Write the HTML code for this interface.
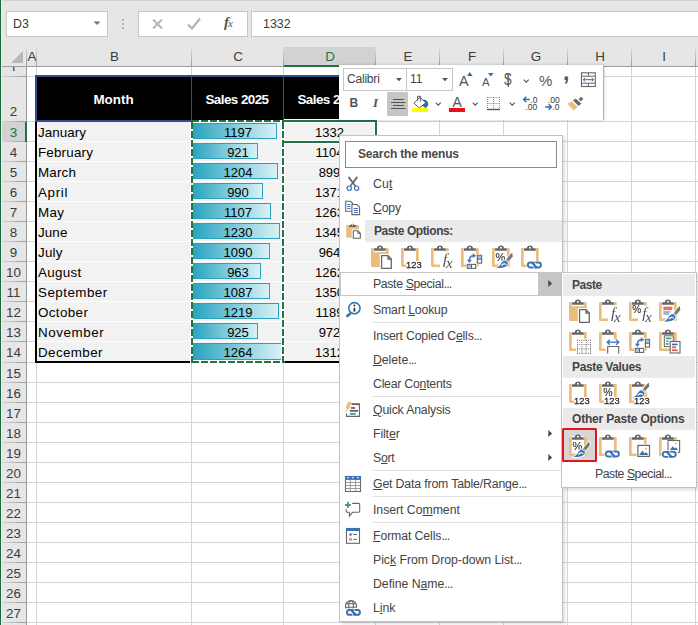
<!DOCTYPE html><html><head><meta charset="utf-8"><title>Excel</title><style>
*{box-sizing:border-box;margin:0;padding:0}
html,body{width:698px;height:625px;overflow:hidden;background:#fff}
body{position:relative;font-family:"Liberation Sans",sans-serif;color:#000}
.abs{position:absolute}
#top{left:0;top:0;width:698px;height:47px;background:#e6e6e6}
.box{position:absolute;background:#fff;border:1px solid #c6c6c6;top:11px;height:26px}
.ui{font-family:"Liberation Sans",sans-serif;font-size:12px;color:#444;white-space:nowrap}
.cell{font-family:"Liberation Sans",sans-serif;font-size:13.4px;white-space:nowrap;color:#000}
.colh{position:absolute;top:47px;height:19px;background:#e6e6e6;font-size:13.4px;color:#3b3b3b;text-align:center;line-height:20px}
.rowh{position:absolute;left:1px;width:25px;background:#e6e6e6;font-size:13.4px;color:#3b3b3b;text-align:center}
.vl{position:absolute;width:1px;background:#d4d4d4}
.hl{position:absolute;height:1px;background:#d4d4d4}
.mi{position:absolute;left:373px;font-size:12.3px;color:#444;white-space:nowrap;letter-spacing:-0.22px}
.mi i{font-style:normal;letter-spacing:-0.75px}
.mi u{text-decoration:underline;text-underline-offset:1px}
.sep{position:absolute;left:373px;width:189px;height:1px;background:#e1e1e1}
.hdr{position:absolute;background:#ebebeb;background-image:radial-gradient(circle at 1.5px 1.5px,#e5e5e5 .7px,rgba(229,229,229,0) .9px);background-size:3px 3px;font-weight:bold;font-size:12px;color:#444;white-space:nowrap}
</style></head><body>
<div id="top" class="abs"></div>
<div class="abs" style="left:0;top:0;width:698px;height:1px;background:#d2d2d2"></div>
<div class="abs" style="left:1px;top:0;width:1px;height:625px;background:#efecec;z-index:5"></div>
<div class="abs" style="left:0;top:0;width:1px;height:625px;background:#1a6b3e;z-index:5"></div>
<div class="box" style="left:6px;width:102px"><span class="abs cell" style="left:6px;top:5px;color:#3a3a3a;font-size:12.4px">D3</span><svg class="abs" style="left:86px;top:9px" width="9" height="5"><path d="M0.5 0.5h7l-3.5 3.5z" fill="#777"/></svg></div>
<svg class="abs" style="left:121px;top:18px" width="4" height="14"><rect x="1" y="1" width="2" height="2" fill="#b5b5b5"/><rect x="1" y="5" width="2" height="2" fill="#b5b5b5"/><rect x="1" y="9" width="2" height="2" fill="#b5b5b5"/></svg>
<div class="box" style="left:138px;width:110px"><svg class="abs" style="left:13px;top:7px" width="11" height="11"><path d="M1 .5l9 9M10 .5l-9 9" stroke="#b3b3b3" stroke-width="1.900" fill="none"/></svg><svg class="abs" style="left:48px;top:6px" width="14" height="12"><path d="M1 6.500l4 4l8-10" stroke="#b3b3b3" stroke-width="2.200" fill="none"/></svg><span class="abs" style="left:85px;top:2px;font-family:'Liberation Serif',serif;font-style:italic;font-size:15px;color:#555;letter-spacing:-1px"><b>f</b><span style="font-size:11px">x</span></span></div>
<div class="box" style="left:251px;width:460px"><span class="abs cell" style="left:11px;top:5px;color:#3a3a3a;font-size:12.4px">1332</span></div>
<div class="abs" style="left:1px;top:47px;width:697px;height:20px;background:#e6e6e6;border-bottom:1px solid #9e9e9e"></div>
<svg class="abs" style="left:10px;top:51px" width="14" height="14"><path d="M13 0v12h-12z" fill="#b8b8b8"/></svg>
<div class="abs" style="left:26px;top:47px;width:1px;height:19px;background:linear-gradient(#e0e0e0,#9a9a9a)"></div>
<div class="colh" style="left:27px;width:10px;">A</div>
<div class="colh" style="left:37px;width:155px;">B</div>
<div class="colh" style="left:192px;width:92px;">C</div>
<div class="colh" style="left:284px;width:92px;background:#d2d2d2;color:#217346;border-bottom:2px solid #217346;height:20px;">D</div>
<div class="colh" style="left:376px;width:64px;">E</div>
<div class="colh" style="left:440px;width:64px;">F</div>
<div class="colh" style="left:504px;width:64px;">G</div>
<div class="colh" style="left:568px;width:64px;">H</div>
<div class="colh" style="left:632px;width:64px;">I</div>
<div class="abs" style="left:36px;top:47px;width:1px;height:19px;background:linear-gradient(#e0e0e0,#9a9a9a)"></div>
<div class="abs" style="left:191px;top:47px;width:1px;height:19px;background:linear-gradient(#e0e0e0,#9a9a9a)"></div>
<div class="abs" style="left:283px;top:47px;width:1px;height:19px;background:linear-gradient(#e0e0e0,#9a9a9a)"></div>
<div class="abs" style="left:375px;top:47px;width:1px;height:19px;background:linear-gradient(#e0e0e0,#9a9a9a)"></div>
<div class="abs" style="left:439px;top:47px;width:1px;height:19px;background:linear-gradient(#e0e0e0,#9a9a9a)"></div>
<div class="abs" style="left:503px;top:47px;width:1px;height:19px;background:linear-gradient(#e0e0e0,#9a9a9a)"></div>
<div class="abs" style="left:567px;top:47px;width:1px;height:19px;background:linear-gradient(#e0e0e0,#9a9a9a)"></div>
<div class="abs" style="left:631px;top:47px;width:1px;height:19px;background:linear-gradient(#e0e0e0,#9a9a9a)"></div>
<div class="abs" style="left:695px;top:47px;width:1px;height:19px;background:linear-gradient(#e0e0e0,#9a9a9a)"></div>
<div class="rowh" style="top:67px;height:10px;overflow:hidden;"><span class="abs" style="left:11px;width:4px;top:0;height:4px;overflow:hidden"><span class="abs" style="left:-11px;width:25px;top:-7px;line-height:20px">1</span></span></div>
<div class="abs" style="left:1px;top:76px;width:25px;height:1px;background:linear-gradient(90deg,#d8d8d8,#9a9a9a)"></div>
<div class="rowh" style="top:77px;height:45px;"><span class="abs" style="left:0;width:25px;bottom:0px;line-height:20px">2</span></div>
<div class="abs" style="left:1px;top:121px;width:25px;height:1px;background:linear-gradient(90deg,#d8d8d8,#9a9a9a)"></div>
<div class="rowh" style="top:122px;height:20px;background:#d2d2d2;color:#217346;"><span class="abs" style="left:0;width:25px;bottom:-1px;line-height:20px">3</span></div>
<div class="abs" style="left:1px;top:141px;width:25px;height:1px;background:linear-gradient(90deg,#d8d8d8,#9a9a9a)"></div>
<div class="rowh" style="top:142px;height:20px;"><span class="abs" style="left:0;width:25px;bottom:-1px;line-height:20px">4</span></div>
<div class="abs" style="left:1px;top:161px;width:25px;height:1px;background:linear-gradient(90deg,#d8d8d8,#9a9a9a)"></div>
<div class="rowh" style="top:162px;height:20px;"><span class="abs" style="left:0;width:25px;bottom:-1px;line-height:20px">5</span></div>
<div class="abs" style="left:1px;top:181px;width:25px;height:1px;background:linear-gradient(90deg,#d8d8d8,#9a9a9a)"></div>
<div class="rowh" style="top:182px;height:20px;"><span class="abs" style="left:0;width:25px;bottom:-1px;line-height:20px">6</span></div>
<div class="abs" style="left:1px;top:201px;width:25px;height:1px;background:linear-gradient(90deg,#d8d8d8,#9a9a9a)"></div>
<div class="rowh" style="top:202px;height:20px;"><span class="abs" style="left:0;width:25px;bottom:-1px;line-height:20px">7</span></div>
<div class="abs" style="left:1px;top:221px;width:25px;height:1px;background:linear-gradient(90deg,#d8d8d8,#9a9a9a)"></div>
<div class="rowh" style="top:222px;height:20px;"><span class="abs" style="left:0;width:25px;bottom:-1px;line-height:20px">8</span></div>
<div class="abs" style="left:1px;top:241px;width:25px;height:1px;background:linear-gradient(90deg,#d8d8d8,#9a9a9a)"></div>
<div class="rowh" style="top:242px;height:20px;"><span class="abs" style="left:0;width:25px;bottom:-1px;line-height:20px">9</span></div>
<div class="abs" style="left:1px;top:261px;width:25px;height:1px;background:linear-gradient(90deg,#d8d8d8,#9a9a9a)"></div>
<div class="rowh" style="top:262px;height:20px;"><span class="abs" style="left:0;width:25px;bottom:-1px;line-height:20px">10</span></div>
<div class="abs" style="left:1px;top:281px;width:25px;height:1px;background:linear-gradient(90deg,#d8d8d8,#9a9a9a)"></div>
<div class="rowh" style="top:282px;height:20px;"><span class="abs" style="left:0;width:25px;bottom:-1px;line-height:20px">11</span></div>
<div class="abs" style="left:1px;top:301px;width:25px;height:1px;background:linear-gradient(90deg,#d8d8d8,#9a9a9a)"></div>
<div class="rowh" style="top:302px;height:20px;"><span class="abs" style="left:0;width:25px;bottom:-1px;line-height:20px">12</span></div>
<div class="abs" style="left:1px;top:321px;width:25px;height:1px;background:linear-gradient(90deg,#d8d8d8,#9a9a9a)"></div>
<div class="rowh" style="top:322px;height:20px;"><span class="abs" style="left:0;width:25px;bottom:-1px;line-height:20px">13</span></div>
<div class="abs" style="left:1px;top:341px;width:25px;height:1px;background:linear-gradient(90deg,#d8d8d8,#9a9a9a)"></div>
<div class="rowh" style="top:342px;height:21px;"><span class="abs" style="left:0;width:25px;bottom:0px;line-height:20px">14</span></div>
<div class="abs" style="left:1px;top:362px;width:25px;height:1px;background:linear-gradient(90deg,#d8d8d8,#9a9a9a)"></div>
<div class="rowh" style="top:363px;height:20px;"><span class="abs" style="left:0;width:25px;bottom:-1px;line-height:20px">15</span></div>
<div class="abs" style="left:1px;top:382px;width:25px;height:1px;background:linear-gradient(90deg,#d8d8d8,#9a9a9a)"></div>
<div class="rowh" style="top:383px;height:20px;"><span class="abs" style="left:0;width:25px;bottom:-1px;line-height:20px">16</span></div>
<div class="abs" style="left:1px;top:402px;width:25px;height:1px;background:linear-gradient(90deg,#d8d8d8,#9a9a9a)"></div>
<div class="rowh" style="top:403px;height:20px;"><span class="abs" style="left:0;width:25px;bottom:-1px;line-height:20px">17</span></div>
<div class="abs" style="left:1px;top:422px;width:25px;height:1px;background:linear-gradient(90deg,#d8d8d8,#9a9a9a)"></div>
<div class="rowh" style="top:423px;height:20px;"><span class="abs" style="left:0;width:25px;bottom:-1px;line-height:20px">18</span></div>
<div class="abs" style="left:1px;top:442px;width:25px;height:1px;background:linear-gradient(90deg,#d8d8d8,#9a9a9a)"></div>
<div class="rowh" style="top:443px;height:20px;"><span class="abs" style="left:0;width:25px;bottom:-1px;line-height:20px">19</span></div>
<div class="abs" style="left:1px;top:462px;width:25px;height:1px;background:linear-gradient(90deg,#d8d8d8,#9a9a9a)"></div>
<div class="rowh" style="top:463px;height:20px;"><span class="abs" style="left:0;width:25px;bottom:-1px;line-height:20px">20</span></div>
<div class="abs" style="left:1px;top:482px;width:25px;height:1px;background:linear-gradient(90deg,#d8d8d8,#9a9a9a)"></div>
<div class="rowh" style="top:483px;height:20px;"><span class="abs" style="left:0;width:25px;bottom:-1px;line-height:20px">21</span></div>
<div class="abs" style="left:1px;top:502px;width:25px;height:1px;background:linear-gradient(90deg,#d8d8d8,#9a9a9a)"></div>
<div class="rowh" style="top:503px;height:20px;"><span class="abs" style="left:0;width:25px;bottom:-1px;line-height:20px">22</span></div>
<div class="abs" style="left:1px;top:522px;width:25px;height:1px;background:linear-gradient(90deg,#d8d8d8,#9a9a9a)"></div>
<div class="rowh" style="top:523px;height:20px;"><span class="abs" style="left:0;width:25px;bottom:-1px;line-height:20px">23</span></div>
<div class="abs" style="left:1px;top:542px;width:25px;height:1px;background:linear-gradient(90deg,#d8d8d8,#9a9a9a)"></div>
<div class="rowh" style="top:543px;height:20px;"><span class="abs" style="left:0;width:25px;bottom:-1px;line-height:20px">24</span></div>
<div class="abs" style="left:1px;top:562px;width:25px;height:1px;background:linear-gradient(90deg,#d8d8d8,#9a9a9a)"></div>
<div class="rowh" style="top:563px;height:20px;"><span class="abs" style="left:0;width:25px;bottom:-1px;line-height:20px">25</span></div>
<div class="abs" style="left:1px;top:582px;width:25px;height:1px;background:linear-gradient(90deg,#d8d8d8,#9a9a9a)"></div>
<div class="rowh" style="top:583px;height:20px;"><span class="abs" style="left:0;width:25px;bottom:-1px;line-height:20px">26</span></div>
<div class="abs" style="left:1px;top:602px;width:25px;height:1px;background:linear-gradient(90deg,#d8d8d8,#9a9a9a)"></div>
<div class="rowh" style="top:603px;height:20px;"><span class="abs" style="left:0;width:25px;bottom:-1px;line-height:20px">27</span></div>
<div class="abs" style="left:1px;top:622px;width:25px;height:1px;background:linear-gradient(90deg,#d8d8d8,#9a9a9a)"></div>
<div class="rowh" style="top:623px;height:20px;"><span class="abs" style="left:0;width:25px;bottom:-1px;line-height:20px">28</span></div>
<div class="abs" style="left:1px;top:642px;width:25px;height:1px;background:linear-gradient(90deg,#d8d8d8,#9a9a9a)"></div>
<div class="abs" style="left:26px;top:67px;width:1px;height:558px;background:#9e9e9e"></div>
<div class="abs" style="left:25px;top:122px;width:2px;height:20px;background:#217346"></div>
<div class="vl" style="left:36px;top:67px;height:558px"></div>
<div class="vl" style="left:191px;top:67px;height:558px"></div>
<div class="vl" style="left:283px;top:67px;height:558px"></div>
<div class="vl" style="left:375px;top:67px;height:558px"></div>
<div class="vl" style="left:439px;top:67px;height:558px"></div>
<div class="vl" style="left:503px;top:67px;height:558px"></div>
<div class="vl" style="left:567px;top:67px;height:558px"></div>
<div class="vl" style="left:631px;top:67px;height:558px"></div>
<div class="vl" style="left:695px;top:67px;height:558px"></div>
<div class="hl" style="left:27px;top:76px;width:671px"></div>
<div class="hl" style="left:27px;top:121px;width:671px"></div>
<div class="hl" style="left:27px;top:141px;width:671px"></div>
<div class="hl" style="left:27px;top:161px;width:671px"></div>
<div class="hl" style="left:27px;top:181px;width:671px"></div>
<div class="hl" style="left:27px;top:201px;width:671px"></div>
<div class="hl" style="left:27px;top:221px;width:671px"></div>
<div class="hl" style="left:27px;top:241px;width:671px"></div>
<div class="hl" style="left:27px;top:261px;width:671px"></div>
<div class="hl" style="left:27px;top:281px;width:671px"></div>
<div class="hl" style="left:27px;top:301px;width:671px"></div>
<div class="hl" style="left:27px;top:321px;width:671px"></div>
<div class="hl" style="left:27px;top:341px;width:671px"></div>
<div class="hl" style="left:27px;top:362px;width:671px"></div>
<div class="hl" style="left:27px;top:382px;width:671px"></div>
<div class="hl" style="left:27px;top:402px;width:671px"></div>
<div class="hl" style="left:27px;top:422px;width:671px"></div>
<div class="hl" style="left:27px;top:442px;width:671px"></div>
<div class="hl" style="left:27px;top:462px;width:671px"></div>
<div class="hl" style="left:27px;top:482px;width:671px"></div>
<div class="hl" style="left:27px;top:502px;width:671px"></div>
<div class="hl" style="left:27px;top:522px;width:671px"></div>
<div class="hl" style="left:27px;top:542px;width:671px"></div>
<div class="hl" style="left:27px;top:562px;width:671px"></div>
<div class="hl" style="left:27px;top:582px;width:671px"></div>
<div class="hl" style="left:27px;top:602px;width:671px"></div>
<div class="hl" style="left:27px;top:622px;width:671px"></div>
<div class="abs" style="left:36px;top:76px;width:339px;height:46px;background:#000"></div>
<div class="abs" style="left:36px;top:122px;width:339px;height:239px;background:#f2f2f2"></div>
<div class="hl" style="left:37px;top:141px;width:338px;background:#fdfdfd"></div>
<div class="hl" style="left:37px;top:161px;width:338px;background:#fdfdfd"></div>
<div class="hl" style="left:37px;top:181px;width:338px;background:#fdfdfd"></div>
<div class="hl" style="left:37px;top:201px;width:338px;background:#fdfdfd"></div>
<div class="hl" style="left:37px;top:221px;width:338px;background:#fdfdfd"></div>
<div class="hl" style="left:37px;top:241px;width:338px;background:#fdfdfd"></div>
<div class="hl" style="left:37px;top:261px;width:338px;background:#fdfdfd"></div>
<div class="hl" style="left:37px;top:281px;width:338px;background:#fdfdfd"></div>
<div class="hl" style="left:37px;top:301px;width:338px;background:#fdfdfd"></div>
<div class="hl" style="left:37px;top:321px;width:338px;background:#fdfdfd"></div>
<div class="hl" style="left:37px;top:341px;width:338px;background:#fdfdfd"></div>
<div class="vl" style="left:191px;top:122px;height:240px;background:#fdfdfd"></div>
<div class="vl" style="left:283px;top:122px;height:240px;background:#fdfdfd"></div>
<div class="abs" style="left:35px;top:75px;width:341px;height:47px;border:2px solid #2f4f8f;border-right:none"></div>
<div class="abs" style="left:191px;top:76px;width:1px;height:45px;background:#2f4f8f"></div>
<div class="abs" style="left:283px;top:76px;width:1px;height:45px;background:#2f4f8f"></div>
<div class="abs" style="left:36px;width:155px;font-weight:bold;color:#fff;font-size:13.4px;top:92px;text-align:center;white-space:nowrap">Month</div>
<div class="abs" style="left:191px;width:92px;font-weight:bold;color:#fff;font-size:13.4px;top:92px;text-align:center;white-space:nowrap;letter-spacing:-0.55px">Sales 2025</div>
<div class="abs" style="left:283px;width:92px;font-weight:bold;color:#fff;font-size:13.4px;top:92px;text-align:center;white-space:nowrap;letter-spacing:-0.55px">Sales 2024</div>
<div class="abs" style="left:35px;top:122px;width:2px;height:241px;background:#000"></div>
<div class="abs" style="left:35px;top:361px;width:341px;height:2px;background:#000"></div>
<div class="abs cell" style="left:38px;top:125px;letter-spacing:0.05px">January</div>
<div class="abs" style="left:193px;top:123px;width:84px;height:16px;border:1px solid #2aa1bd;background:linear-gradient(90deg,#2aa5c0,#d9f1f6)"></div>
<div class="abs cell" style="left:192px;width:92px;top:125px;text-align:center;font-size:13px">1197</div>
<div class="abs cell" style="left:283.500px;width:92px;top:125px;text-align:center;font-size:13px">1332</div>
<div class="abs cell" style="left:38px;top:145px;letter-spacing:0.18px">February</div>
<div class="abs" style="left:193px;top:143px;width:65px;height:16px;border:1px solid #2aa1bd;background:linear-gradient(90deg,#2aa5c0,#d9f1f6)"></div>
<div class="abs cell" style="left:192px;width:92px;top:145px;text-align:center;font-size:13px">921</div>
<div class="abs cell" style="left:283.500px;width:92px;top:145px;text-align:center;font-size:13px">1104</div>
<div class="abs cell" style="left:38px;top:165px;letter-spacing:0.18px">March</div>
<div class="abs" style="left:193px;top:163px;width:85px;height:16px;border:1px solid #2aa1bd;background:linear-gradient(90deg,#2aa5c0,#d9f1f6)"></div>
<div class="abs cell" style="left:192px;width:92px;top:165px;text-align:center;font-size:13px">1204</div>
<div class="abs cell" style="left:283.500px;width:92px;top:165px;text-align:center;font-size:13px">899</div>
<div class="abs cell" style="left:38px;top:185px;letter-spacing:0.66px">April</div>
<div class="abs" style="left:193px;top:183px;width:70px;height:16px;border:1px solid #2aa1bd;background:linear-gradient(90deg,#2aa5c0,#d9f1f6)"></div>
<div class="abs cell" style="left:192px;width:92px;top:185px;text-align:center;font-size:13px">990</div>
<div class="abs cell" style="left:283.500px;width:92px;top:185px;text-align:center;font-size:13px">1371</div>
<div class="abs cell" style="left:38px;top:205px;letter-spacing:0.36px">May</div>
<div class="abs" style="left:193px;top:203px;width:78px;height:16px;border:1px solid #2aa1bd;background:linear-gradient(90deg,#2aa5c0,#d9f1f6)"></div>
<div class="abs cell" style="left:192px;width:92px;top:205px;text-align:center;font-size:13px">1107</div>
<div class="abs cell" style="left:283.500px;width:92px;top:205px;text-align:center;font-size:13px">1263</div>
<div class="abs cell" style="left:38px;top:225px;letter-spacing:0.11px">June</div>
<div class="abs" style="left:193px;top:223px;width:87px;height:16px;border:1px solid #2aa1bd;background:linear-gradient(90deg,#2aa5c0,#d9f1f6)"></div>
<div class="abs cell" style="left:192px;width:92px;top:225px;text-align:center;font-size:13px">1230</div>
<div class="abs cell" style="left:283.500px;width:92px;top:225px;text-align:center;font-size:13px">1345</div>
<div class="abs cell" style="left:38px;top:245px;letter-spacing:0.19px">July</div>
<div class="abs" style="left:193px;top:243px;width:77px;height:16px;border:1px solid #2aa1bd;background:linear-gradient(90deg,#2aa5c0,#d9f1f6)"></div>
<div class="abs cell" style="left:192px;width:92px;top:245px;text-align:center;font-size:13px">1090</div>
<div class="abs cell" style="left:283.500px;width:92px;top:245px;text-align:center;font-size:13px">964</div>
<div class="abs cell" style="left:38px;top:265px;letter-spacing:0.33px">August</div>
<div class="abs" style="left:193px;top:263px;width:68px;height:16px;border:1px solid #2aa1bd;background:linear-gradient(90deg,#2aa5c0,#d9f1f6)"></div>
<div class="abs cell" style="left:192px;width:92px;top:265px;text-align:center;font-size:13px">963</div>
<div class="abs cell" style="left:283.500px;width:92px;top:265px;text-align:center;font-size:13px">1262</div>
<div class="abs cell" style="left:38px;top:285px;letter-spacing:0.46px">September</div>
<div class="abs" style="left:193px;top:283px;width:77px;height:16px;border:1px solid #2aa1bd;background:linear-gradient(90deg,#2aa5c0,#d9f1f6)"></div>
<div class="abs cell" style="left:192px;width:92px;top:285px;text-align:center;font-size:13px">1087</div>
<div class="abs cell" style="left:283.500px;width:92px;top:285px;text-align:center;font-size:13px">1350</div>
<div class="abs cell" style="left:38px;top:305px;letter-spacing:0.37px">October</div>
<div class="abs" style="left:193px;top:303px;width:86px;height:16px;border:1px solid #2aa1bd;background:linear-gradient(90deg,#2aa5c0,#d9f1f6)"></div>
<div class="abs cell" style="left:192px;width:92px;top:305px;text-align:center;font-size:13px">1219</div>
<div class="abs cell" style="left:283.500px;width:92px;top:305px;text-align:center;font-size:13px">1189</div>
<div class="abs cell" style="left:38px;top:325px;letter-spacing:0.55px">November</div>
<div class="abs" style="left:193px;top:323px;width:65px;height:16px;border:1px solid #2aa1bd;background:linear-gradient(90deg,#2aa5c0,#d9f1f6)"></div>
<div class="abs cell" style="left:192px;width:92px;top:325px;text-align:center;font-size:13px">925</div>
<div class="abs cell" style="left:283.500px;width:92px;top:325px;text-align:center;font-size:13px">972</div>
<div class="abs cell" style="left:38px;top:345px;letter-spacing:0.38px">December</div>
<div class="abs" style="left:193px;top:343px;width:89px;height:17px;border:1px solid #2aa1bd;background:linear-gradient(90deg,#2aa5c0,#d9f1f6)"></div>
<div class="abs cell" style="left:192px;width:92px;top:345px;text-align:center;font-size:13px">1264</div>
<div class="abs cell" style="left:283.500px;width:92px;top:345px;text-align:center;font-size:13px">1312</div>
<svg class="abs" style="left:188px;top:118px" width="98" height="247" shape-rendering="crispEdges"><g fill="#fff"><rect x="2" y="4" width="3" height="241"/><rect x="93" y="4" width="4" height="241"/><rect x="3" y="2" width="93" height="3"/><rect x="3" y="242" width="93" height="3"/></g><g fill="none" stroke="#217346" stroke-width="2"><path d="M3 3h94M3 244h94" stroke-dasharray="7 2" stroke-dashoffset="8"/><path d="M4 4v240M95 4v240" stroke-dasharray="7 2"/><path d="M3 3h2M94 3h2M3 244h2M94 244h2"/></g></svg>
<div class="abs" style="left:284px;top:122px;width:91px;height:19px;border:1px solid #fff"></div>
<div class="abs" style="left:284px;top:119px;width:94px;height:1px;background:#fff"></div>
<div class="abs" style="left:284px;top:143px;width:94px;height:1px;background:#fff"></div>
<div class="abs" style="left:377px;top:119px;width:1px;height:25px;background:#fff"></div>
<div class="abs" style="left:284px;top:120px;width:93px;height:23px;border:2px solid #217346;border-left:none"></div><div class="abs" style="left:339px;top:65px;width:265px;height:55px;background:#fff;border-right:1px solid #b4b4b4;box-shadow:0 0 3px rgba(0,0,0,.22)"></div>
<div class="abs" style="left:343px;top:68px;width:64px;height:23px;border:1px solid #c6c6c6;background:#fff"><span class="abs ui" style="left:3px;top:3px;font-size:12px;letter-spacing:-0.2px">Calibri</span><svg class="abs" style="left:52px;top:9px" width="7" height="4"><path d="M0 0h6l-3 3.200z" fill="#555"/></svg></div>
<div class="abs" style="left:406px;top:68px;width:47px;height:23px;border:1px solid #c6c6c6;background:#fff"><span class="abs ui" style="left:3px;top:3px;font-size:12px">11</span><svg class="abs" style="left:35px;top:9px" width="7" height="4"><path d="M0 0h6l-3 3.200z" fill="#555"/></svg></div>
<span class="abs ui" style="left:459px;top:73px;font-size:14.500px;color:#555">A</span><svg class="abs" style="left:467px;top:72px" width="7" height="5"><path d="M0 4l2.800-4l2.800 4z" fill="#2b6cb5"/></svg>
<span class="abs ui" style="left:482px;top:76px;font-size:11.500px;color:#555">A</span><svg class="abs" style="left:488px;top:73px" width="7" height="5"><path d="M0 0h5.600l-2.800 3.600z" fill="#2b6cb5"/></svg>
<span class="abs ui" style="left:504px;top:70px;font-size:17px;color:#555;transform:scaleX(.8);transform-origin:0 0">$</span><div class="abs" style="left:508px;top:73px;width:1px;height:14px;background:#666"></div>
<svg class="abs" style="left:523px;top:79px" width="7" height="5"><path d="M0.7 0.7l2.5 2.5l2.5-2.5" stroke="#555" fill="none" stroke-width="1.1"/></svg>
<span class="abs ui" style="left:539px;top:72px;font-size:15px;color:#555">%</span>
<span class="abs ui" style="left:563px;top:59px;font-size:23px;font-weight:bold;color:#555">,</span>
<svg class="abs" style="left:580px;top:71px" width="18" height="17"><rect x="1.500" y="1.800" width="13.800" height="13.700" fill="#fff" stroke="#666" stroke-width="1.100"/><path d="M1.500 5.200h13.800M1.500 12.200h13.800M8.400 1.800v3.400M8.400 12.200v3.300" stroke="#666" stroke-width="1" fill="none"/><path d="M3.300 8.700h10.200M5 7l-1.800 1.700l1.800 1.700M11.800 7l1.800 1.700l-1.800 1.700" stroke="#2b6cb5" stroke-width="1" fill="none"/></svg>
<span class="abs ui" style="left:349.500px;top:96px;font-size:12px;font-weight:bold;color:#555">B</span>
<span class="abs" style="left:373px;top:95px;font-size:13px;font-style:italic;font-weight:bold;color:#555;font-family:'Liberation Serif',serif">I</span>
<div class="abs" style="left:387px;top:92px;width:21px;height:24px;background:#c6c6c6"></div>
<svg class="abs" style="left:390px;top:97px" width="16" height="14"><path d="M3 2.500h11M1 5.500h14.500M3 8.500h11M1 11.500h14.500" stroke="#555" stroke-width="1"/></svg>
<svg class="abs" style="left:411px;top:94px" width="20" height="20"><path d="M12.500 5.600c3.600.6 5.200 2.900 4.600 5.300c-.4 1.500-1.400 2.600-2.800 3.100l-2.500-2z" fill="#2b6cb5"/><path d="M8.700 3.400l6.300 5.200l-6.500 5.400l-5.500-4.700z" fill="#fff" stroke="#555" stroke-width="1"/><path d="M6.500 6.500v-4.200h2.800v5.300" fill="none" stroke="#555" stroke-width="1"/><rect x="1" y="14" width="16" height="4" fill="#ffff00"/></svg>
<svg class="abs" style="left:434.700px;top:102px" width="7" height="5"><path d="M0.7 0.7l2.5 2.5l2.5-2.5" stroke="#555" fill="none" stroke-width="1.1"/></svg>
<span class="abs ui" style="left:452.500px;top:94px;font-size:14px;color:#555">A</span><div class="abs" style="left:449px;top:108px;width:16px;height:4px;background:#e8111a"></div>
<svg class="abs" style="left:471.700px;top:102px" width="7" height="5"><path d="M0.7 0.7l2.5 2.5l2.5-2.5" stroke="#555" fill="none" stroke-width="1.1"/></svg>
<svg class="abs" style="left:486px;top:96px" width="15" height="15"><path d="M1.500 1.500h12M1.500 7.500h12M1.500 1v12M7.500 1v12M13.500 1v12" stroke="#888" stroke-width="1" stroke-dasharray="1 1" fill="none"/><path d="M1 13.500h13" stroke="#555" stroke-width="1.400"/></svg>
<svg class="abs" style="left:509px;top:102px" width="7" height="5"><path d="M0.7 0.7l2.5 2.5l2.5-2.5" stroke="#555" fill="none" stroke-width="1.1"/></svg>
<svg class="abs" style="left:522px;top:95px" width="18" height="18"><text x="8.300" y="7.500" font-size="8.500" font-family="Liberation Sans" fill="#3a3a3a">.0</text><text x="3.300" y="15" font-size="8.500" font-family="Liberation Sans" fill="#3a3a3a">.00</text><path d="M1.500 4.500h6.300M4.300 1.800l-2.700 2.700l2.700 2.700" stroke="#2b6cb5" stroke-width="1.400" fill="none"/></svg>
<svg class="abs" style="left:544px;top:95px" width="18" height="18"><text x="3.800" y="7.500" font-size="8.500" font-family="Liberation Sans" fill="#3a3a3a">.00</text><text x="8.500" y="15" font-size="8.500" font-family="Liberation Sans" fill="#3a3a3a">.0</text><path d="M1.200 12h6.300M4.700 9.300l2.700 2.700l-2.700 2.700" stroke="#2b6cb5" stroke-width="1.400" fill="none"/></svg>
<svg class="abs" style="left:566px;top:95px" width="20" height="20"><path d="M1.200 8.400l4.500-1.900l6 5.300l-3.900 3.900z" fill="#eabd7c"/><path d="M7.200 5.400l2.600-1.500l5.100 4.700l-2.100 2.200z" fill="#666" stroke="#666" stroke-width=".6" stroke-linejoin="round"/><path d="M13 4.300l1.900-2.400l2.200 1.800l-2.400 2.500z" fill="#666" stroke="#666" stroke-width=".5" stroke-linejoin="round"/></svg>
<div class="abs" style="left:339px;top:135px;width:224px;height:487px;background:#fff;border:1px solid #c2c2c2;box-shadow:2px 2px 3px rgba(0,0,0,.13)"></div>
<div class="abs" style="left:345px;top:141px;width:212px;height:27px;border:1px solid #8a8a8a;background:#fff"><span class="abs ui" style="left:12px;top:5px;font-weight:bold;font-size:12px;color:#4a4a4a;letter-spacing:-0.16px">Search the menus</span></div>
<div class="hdr" style="left:365px;top:220px;width:197px;height:22px"><span class="abs" style="left:9px;top:4px;letter-spacing:-0.41px">Paste Options:</span></div>
<div class="abs" style="left:340px;top:272px;width:222px;height:24px;background:#fff;border:1px solid #c6c6c6"></div>
<div class="abs" style="left:538px;top:272px;width:23px;height:24px;background:#c6c6c6"></div>
<div class="mi" style="top:176px;line-height:16px;letter-spacing:0.09px">Cu<u>t</u></div>
<div class="mi" style="top:200px;line-height:16px;letter-spacing:-0.18px"><u>C</u>opy</div>
<div class="mi" style="top:276px;line-height:16px;letter-spacing:-0.36px">Paste <u>S</u>pecial<i>...</i></div>
<div class="mi" style="top:302px;line-height:16px;letter-spacing:-0.18px">Smart <u>L</u>ookup</div>
<div class="mi" style="top:327.5px;line-height:16px;letter-spacing:-0.17px">Insert Copied C<u>e</u>lls<i>...</i></div>
<div class="mi" style="top:352px;line-height:16px;letter-spacing:-0.06px"><u>D</u>elete<i>...</i></div>
<div class="mi" style="top:376px;line-height:16px;letter-spacing:-0.25px">Clear Co<u>n</u>tents</div>
<div class="mi" style="top:402px;line-height:16px;letter-spacing:-0.17px"><u>Q</u>uick Analysis</div>
<div class="mi" style="top:426px;line-height:16px;letter-spacing:-0.12px">Filt<u>e</u>r</div>
<div class="mi" style="top:450px;line-height:16px;letter-spacing:-0.29px">S<u>o</u>rt</div>
<div class="mi" style="top:476px;line-height:16px;letter-spacing:-0.16px"><u>G</u>et Data from Table/Range<i>...</i></div>
<div class="mi" style="top:502px;line-height:16px;letter-spacing:-0.05px">Insert Co<u>m</u>ment</div>
<div class="mi" style="top:528px;line-height:16px;letter-spacing:-0.11px"><u>F</u>ormat Cells<i>...</i></div>
<div class="mi" style="top:552px;line-height:16px;letter-spacing:-0.04px">Pic<u>k</u> From Drop-down List<i>...</i></div>
<div class="mi" style="top:575.5px;line-height:16px;letter-spacing:-0.04px">Define N<u>a</u>me<i>...</i></div>
<div class="mi" style="top:600px;line-height:16px;letter-spacing:-0.07px">L<u>i</u>nk</div>
<div class="sep" style="top:322px"></div>
<div class="sep" style="top:396px"></div>
<div class="sep" style="top:470px"></div>
<div class="sep" style="top:496px"></div>
<div class="sep" style="top:522px"></div>
<svg class="abs" style="left:548px;top:279px" width="5" height="9"><path d="M0.300 1l3.700 3.500l-3.700 3.500z" fill="#444"/></svg>
<svg class="abs" style="left:548px;top:429px" width="5" height="9"><path d="M0.300 1l3.700 3.500l-3.700 3.500z" fill="#444"/></svg>
<svg class="abs" style="left:548px;top:453px" width="5" height="9"><path d="M0.300 1l3.700 3.500l-3.700 3.500z" fill="#444"/></svg>
<div class="abs" style="left:561px;top:272px;width:136px;height:216px;background:#fff;border:1px solid #c2c2c2;box-shadow:2px 2px 3px rgba(0,0,0,.13)"></div>
<div class="hdr" style="left:563px;top:274px;width:132px;height:22px"><span class="abs" style="left:9px;top:4px;letter-spacing:-0.47px">Paste</span></div>
<div class="hdr" style="left:563px;top:356px;width:132px;height:22px"><span class="abs" style="left:9px;top:4px;letter-spacing:-0.35px">Paste Values</span></div>
<div class="hdr" style="left:563px;top:408px;width:132px;height:22px"><span class="abs" style="left:9px;top:4px;letter-spacing:-0.19px">Other Paste Options</span></div>
<div class="abs" style="left:562px;top:428px;width:35px;height:34px;background:#d6d6d6;border:2px solid #e8111a;border-radius:1.5px"></div>
<div class="mi" style="left:595px;top:466px;line-height:16px;letter-spacing:-0.5px">Paste <u>S</u>pecial<i>...</i></div>
<svg class="abs" style="left:370px;top:244px;will-change:transform" width="28" height="29"><g transform="translate(1,4)"><rect x="0" y="0" width="17.700" height="19.100" rx="1.300" fill="#eabd7c"/><rect x="2.700" y="-1" width="12.300" height="5.200" fill="#fff"/><path d="M3 2.700v-1.900a.6.6 0 0 1 .6-.6h2.300a3 2.800 0 0 1 6 0h2.300a.6.6 0 0 1 .6.6v1.900z" fill="#666"/><circle cx="8.900" cy="-.3" r="0.950" fill="#fff"/><rect x="8.8" y="6" width="13" height="14" fill="#fff"/><path d="M10.600 7.700h6.400l3.300 3.300v9.300h-9.700z" fill="#fff" stroke="#666" stroke-width="1.300" stroke-linejoin="round"/><path d="M17 7.700v3.300h3.300" fill="none" stroke="#666" stroke-width="1.300"/></g></svg>
<svg class="abs" style="left:400px;top:244px;will-change:transform" width="28" height="29"><g transform="translate(1,4)"><rect x="0" y="0" width="17.700" height="19.100" rx="1.300" fill="#eabd7c"/><rect x="2.700" y="-1" width="12.300" height="17.500" fill="#fff"/><path d="M3 2.700v-1.900a.6.6 0 0 1 .6-.6h2.300a3 2.800 0 0 1 6 0h2.300a.6.6 0 0 1 .6.6v1.900z" fill="#666"/><circle cx="8.900" cy="-.3" r="0.950" fill="#fff"/><rect x="5.2" y="13" width="17" height="9" fill="#fff"/><text x="5.100" y="20" font-family="Liberation Sans,sans-serif" font-size="9.700" fill="#2e2e2e" stroke="#2e2e2e" stroke-width=".3" textLength="15.600" lengthAdjust="spacingAndGlyphs">123</text></g></svg>
<svg class="abs" style="left:430px;top:244px;will-change:transform" width="28" height="29"><g transform="translate(1,4)"><rect x="0" y="0" width="17.700" height="19.100" rx="1.300" fill="#eabd7c"/><rect x="2.700" y="-1" width="12.300" height="17.500" fill="#fff"/><path d="M3 2.700v-1.900a.6.6 0 0 1 .6-.6h2.300a3 2.800 0 0 1 6 0h2.300a.6.6 0 0 1 .6.6v1.900z" fill="#666"/><circle cx="8.900" cy="-.3" r="0.950" fill="#fff"/><rect x="9" y="3.5" width="13" height="18" fill="#fff"/><text x="12" y="15.600" font-family="Liberation Serif,serif" font-style="italic" font-size="15.500" fill="#505050">f</text><text x="15" y="19.500" font-family="Liberation Serif,serif" font-style="italic" font-size="15" fill="#505050">x</text></g></svg>
<svg class="abs" style="left:460px;top:244px;will-change:transform" width="28" height="29"><g transform="translate(1,4)"><rect x="0" y="0" width="17.700" height="19.100" rx="1.300" fill="#eabd7c"/><rect x="2.700" y="-1" width="12.300" height="17.500" fill="#fff"/><path d="M3 2.700v-1.900a.6.6 0 0 1 .6-.6h2.300a3 2.800 0 0 1 6 0h2.300a.6.6 0 0 1 .6.6v1.900z" fill="#666"/><circle cx="8.900" cy="-.3" r="0.950" fill="#fff"/><path d="M8.400 12.300C8.400 9.600 9.800 7.900 12.300 7.700" fill="none" stroke="#3a72b3" stroke-width="1.400"/><path d="M11.800 5.300l3.300 2.400l-3.300 2.400z" fill="#3a72b3"/><path d="M6 11.700l2.400 3.200l2.400 -3.200z" fill="#3a72b3"/><rect x="15.3" y="6.2" width="6.3" height="9.8" fill="#fff"/><rect x="5.2" y="15.4" width="11" height="6" fill="#fff"/><rect x="16.400" y="7.300" width="4.200" height="7.800" fill="#fff" stroke="#666" stroke-width="1.100"/><rect x="16.950" y="7.850" width="3.100" height="3.300" fill="#9dc3e6"/><path d="M16.400 11.300h4.200" stroke="#666" stroke-width="1"/><rect x="6.300" y="16.400" width="8.400" height="4" fill="#fff" stroke="#666" stroke-width="1.100"/><rect x="6.850" y="16.950" width="3.500" height="2.900" fill="#9dc3e6"/><path d="M10.500 16.400v4" stroke="#666" stroke-width="1"/></g></svg>
<svg class="abs" style="left:490.5px;top:244px;will-change:transform" width="28" height="29"><g transform="translate(1,4)"><rect x="0" y="0" width="17.700" height="19.100" rx="1.300" fill="#eabd7c"/><rect x="2.700" y="-1" width="12.300" height="17.500" fill="#fff"/><path d="M3 2.700v-1.900a.6.6 0 0 1 .6-.6h2.300a3 2.800 0 0 1 6 0h2.300a.6.6 0 0 1 .6.6v1.900z" fill="#666"/><circle cx="8.900" cy="-.3" r="0.950" fill="#fff"/><text x="3.5" y="13" font-family="Liberation Sans,sans-serif" font-size="11" fill="#3a3a3a" stroke="#3a3a3a" stroke-width=".2">%</text><g transform="translate(0,0)"><path d="M20.200 4.600l.5 3.800l-4.600 5.500l-2.300-1.900l4-4.900z" fill="#fff" stroke="#fff" stroke-width="1.800" stroke-linejoin="round"/><path d="M13.200 12.500l2.500 2.100c.9 2.400-1.600 4.300-4.600 5c-2.500.5-5 .6-6.900.4c2.800-1 3.800-2.500 4.800-4.200c1-1.800 2.500-3.100 4.200-3.300z" fill="#fff" stroke="#fff" stroke-width="1.800" stroke-linejoin="round"/><path d="M20.200 4.600l.5 3.800l-4.600 5.500l-2.300-1.900l4-4.900z" fill="#757575"/><path d="M14.300 11.200l2.200 1.800" stroke="#fff" stroke-width=".6"/><path d="M13.200 12.500l2.500 2.100c.9 2.400-1.600 4.300-4.600 5c-2.500.5-5 .6-6.900.4c2.800-1 3.800-2.500 4.800-4.200c1-1.800 2.500-3.100 4.200-3.300z" fill="#3a72b3"/><path d="M9.700 17.400c1.300-1.700 3.200-2.100 4.200-.9" stroke="#fff" stroke-width="1.100" fill="none" stroke-linecap="round"/></g></g></svg>
<svg class="abs" style="left:520px;top:244px;will-change:transform" width="28" height="29"><g transform="translate(1,4)"><rect x="0" y="0" width="17.700" height="19.100" rx="1.300" fill="#eabd7c"/><rect x="2.700" y="-1" width="12.300" height="17.500" fill="#fff"/><path d="M3 2.700v-1.900a.6.6 0 0 1 .6-.6h2.300a3 2.800 0 0 1 6 0h2.300a.6.6 0 0 1 .6.6v1.900z" fill="#666"/><circle cx="8.900" cy="-.3" r="0.950" fill="#fff"/><g transform="translate(0,0)"><rect x="5.5" y="13" width="16.5" height="8" fill="#fff"/><rect x="6.85" y="14.55" width="13.10" height="5.00" rx="2.50" fill="none" stroke="#3a72b3" stroke-width="1.9"/><path d="M11.45 14.93L15.35 19.17" stroke="#3a72b3" stroke-width="2.18" stroke-linecap="round"/><path d="M13.44 13.30l1.1 2.40M12.26 18.40l1.1 2.40" stroke="#fff" stroke-width=".8"/></g></g></svg>
<svg class="abs" style="left:568px;top:298px;will-change:transform" width="28" height="29"><g transform="translate(1,4)"><rect x="0" y="0" width="17.700" height="19.100" rx="1.300" fill="#eabd7c"/><rect x="2.700" y="-1" width="12.300" height="5.200" fill="#fff"/><path d="M3 2.700v-1.900a.6.6 0 0 1 .6-.6h2.300a3 2.800 0 0 1 6 0h2.300a.6.6 0 0 1 .6.6v1.900z" fill="#666"/><circle cx="8.900" cy="-.3" r="0.950" fill="#fff"/><rect x="8.8" y="6" width="13" height="14" fill="#fff"/><path d="M10.600 7.700h6.400l3.300 3.300v9.300h-9.700z" fill="#fff" stroke="#666" stroke-width="1.300" stroke-linejoin="round"/><path d="M17 7.700v3.300h3.300" fill="none" stroke="#666" stroke-width="1.300"/></g></svg>
<svg class="abs" style="left:598px;top:298px;will-change:transform" width="28" height="29"><g transform="translate(1,4)"><rect x="0" y="0" width="17.700" height="19.100" rx="1.300" fill="#eabd7c"/><rect x="2.700" y="-1" width="12.300" height="17.500" fill="#fff"/><path d="M3 2.700v-1.900a.6.6 0 0 1 .6-.6h2.300a3 2.800 0 0 1 6 0h2.300a.6.6 0 0 1 .6.6v1.900z" fill="#666"/><circle cx="8.900" cy="-.3" r="0.950" fill="#fff"/><rect x="9" y="3.5" width="13" height="18" fill="#fff"/><text x="12" y="15.600" font-family="Liberation Serif,serif" font-style="italic" font-size="15.500" fill="#505050">f</text><text x="15" y="19.500" font-family="Liberation Serif,serif" font-style="italic" font-size="15" fill="#505050">x</text></g></svg>
<svg class="abs" style="left:628px;top:298px;will-change:transform" width="28" height="29"><g transform="translate(1,4)"><rect x="0" y="0" width="17.700" height="19.100" rx="1.300" fill="#eabd7c"/><rect x="2.700" y="-1" width="12.300" height="17.500" fill="#fff"/><path d="M3 2.700v-1.900a.6.6 0 0 1 .6-.6h2.300a3 2.800 0 0 1 6 0h2.300a.6.6 0 0 1 .6.6v1.900z" fill="#666"/><circle cx="8.900" cy="-.3" r="0.950" fill="#fff"/><rect x="9" y="3.5" width="13" height="18" fill="#fff"/><text x="3.3" y="10.8" font-family="Liberation Sans,sans-serif" font-size="10" fill="#3a3a3a" stroke="#3a3a3a" stroke-width=".2">%</text><text x="13.2" y="15.600" font-family="Liberation Serif,serif" font-style="italic" font-size="15.500" fill="#505050">f</text><text x="16.2" y="19.500" font-family="Liberation Serif,serif" font-style="italic" font-size="15" fill="#505050">x</text></g></svg>
<svg class="abs" style="left:658px;top:298px;will-change:transform" width="28" height="29"><g transform="translate(1,4)"><rect x="0" y="0" width="17.700" height="19.100" rx="1.300" fill="#eabd7c"/><rect x="2.700" y="-1" width="12.300" height="17.500" fill="#fff"/><path d="M3 2.700v-1.900a.6.6 0 0 1 .6-.6h2.300a3 2.800 0 0 1 6 0h2.300a.6.6 0 0 1 .6.6v1.900z" fill="#666"/><circle cx="8.900" cy="-.3" r="0.950" fill="#fff"/><rect x="4.300" y="4.700" width="9" height="3.400" fill="#e2574c"/><path d="M4.300 5.800h9M4.300 7h9" stroke="#fff" stroke-width=".5" stroke-dasharray="1 1"/><path d="M4.300 10h7M4.300 12h5.500" stroke="#3a72b3" stroke-width="1"/><g transform="translate(0.6,-0.5)"><path d="M20.200 4.600l.5 3.800l-4.600 5.500l-2.300-1.900l4-4.900z" fill="#fff" stroke="#fff" stroke-width="1.800" stroke-linejoin="round"/><path d="M13.200 12.500l2.500 2.100c.9 2.400-1.600 4.300-4.600 5c-2.500.5-5 .6-6.900.4c2.800-1 3.800-2.500 4.800-4.200c1-1.800 2.500-3.100 4.200-3.300z" fill="#fff" stroke="#fff" stroke-width="1.800" stroke-linejoin="round"/><path d="M20.200 4.600l.5 3.800l-4.600 5.500l-2.300-1.900l4-4.900z" fill="#757575"/><path d="M14.300 11.200l2.200 1.800" stroke="#fff" stroke-width=".6"/><path d="M13.200 12.500l2.500 2.100c.9 2.400-1.600 4.300-4.600 5c-2.500.5-5 .6-6.900.4c2.800-1 3.800-2.500 4.800-4.200c1-1.800 2.500-3.100 4.200-3.300z" fill="#3a72b3"/><path d="M9.700 17.400c1.300-1.700 3.200-2.100 4.200-.9" stroke="#fff" stroke-width="1.100" fill="none" stroke-linecap="round"/></g></g></svg>
<svg class="abs" style="left:568px;top:328px;will-change:transform" width="28" height="29"><g transform="translate(1,4)"><rect x="0" y="0" width="17.700" height="19.100" rx="1.300" fill="#eabd7c"/><rect x="2.700" y="-1" width="12.300" height="17.500" fill="#fff"/><path d="M3 2.700v-1.900a.6.6 0 0 1 .6-.6h2.300a3 2.800 0 0 1 6 0h2.300a.6.6 0 0 1 .6.6v1.900z" fill="#666"/><circle cx="8.900" cy="-.3" r="0.950" fill="#fff"/><rect x="7" y="6.8" width="15.5" height="15.5" fill="#fff"/><g fill="#666"><rect x="8.00" y="7.80" width="1" height="1"/><rect x="8.00" y="9.97" width="1" height="1"/><rect x="8.00" y="12.13" width="1" height="1"/><rect x="8.00" y="14.30" width="1" height="1"/><rect x="8.00" y="16.46" width="1" height="1"/><rect x="8.00" y="16.47" width="1" height="1"/><rect x="8.00" y="18.63" width="1" height="1"/><rect x="8.00" y="20.79" width="1" height="1"/><rect x="8.00" y="20.80" width="1" height="1"/><rect x="10.17" y="7.80" width="1" height="1"/><rect x="10.17" y="12.13" width="1" height="1"/><rect x="10.17" y="16.46" width="1" height="1"/><rect x="10.17" y="20.79" width="1" height="1"/><rect x="12.33" y="7.80" width="1" height="1"/><rect x="12.33" y="9.97" width="1" height="1"/><rect x="12.33" y="12.13" width="1" height="1"/><rect x="12.33" y="14.30" width="1" height="1"/><rect x="12.33" y="16.46" width="1" height="1"/><rect x="12.33" y="16.47" width="1" height="1"/><rect x="12.33" y="18.63" width="1" height="1"/><rect x="12.33" y="20.79" width="1" height="1"/><rect x="12.33" y="20.80" width="1" height="1"/><rect x="14.50" y="7.80" width="1" height="1"/><rect x="14.50" y="12.13" width="1" height="1"/><rect x="14.50" y="16.46" width="1" height="1"/><rect x="14.50" y="20.79" width="1" height="1"/><rect x="16.66" y="7.80" width="1" height="1"/><rect x="16.66" y="9.97" width="1" height="1"/><rect x="16.66" y="12.13" width="1" height="1"/><rect x="16.66" y="14.30" width="1" height="1"/><rect x="16.66" y="16.47" width="1" height="1"/><rect x="16.66" y="18.63" width="1" height="1"/><rect x="16.66" y="20.80" width="1" height="1"/><rect x="16.67" y="7.80" width="1" height="1"/><rect x="16.67" y="12.13" width="1" height="1"/><rect x="16.67" y="16.46" width="1" height="1"/><rect x="16.67" y="20.79" width="1" height="1"/><rect x="18.83" y="7.80" width="1" height="1"/><rect x="18.83" y="12.13" width="1" height="1"/><rect x="18.83" y="16.46" width="1" height="1"/><rect x="18.83" y="20.79" width="1" height="1"/><rect x="20.99" y="7.80" width="1" height="1"/><rect x="20.99" y="9.97" width="1" height="1"/><rect x="20.99" y="12.13" width="1" height="1"/><rect x="20.99" y="14.30" width="1" height="1"/><rect x="20.99" y="16.47" width="1" height="1"/><rect x="20.99" y="18.63" width="1" height="1"/><rect x="20.99" y="20.80" width="1" height="1"/><rect x="21.00" y="7.80" width="1" height="1"/><rect x="21.00" y="12.13" width="1" height="1"/><rect x="21.00" y="16.46" width="1" height="1"/><rect x="21.00" y="20.79" width="1" height="1"/></g></g></svg>
<svg class="abs" style="left:598px;top:328px;will-change:transform" width="28" height="29"><g transform="translate(1,4)"><rect x="0" y="0" width="17.700" height="19.100" rx="1.300" fill="#eabd7c"/><rect x="2.700" y="-1" width="12.300" height="17.500" fill="#fff"/><path d="M3 2.700v-1.900a.6.6 0 0 1 .6-.6h2.300a3 2.800 0 0 1 6 0h2.300a.6.6 0 0 1 .6.6v1.900z" fill="#666"/><circle cx="8.900" cy="-.3" r="0.950" fill="#fff"/><rect x="6.5" y="7.5" width="16" height="15" fill="#fff"/><path d="M8.500 10.200h11" stroke="#3a72b3" stroke-width="1.300"/><path d="M10.800 7.700l-2.600 2.500l2.600 2.500M17.200 7.700l2.600 2.500l-2.600 2.500" fill="none" stroke="#3a72b3" stroke-width="1.300"/><path d="M8.700 21.500v-7h11v7" fill="#fff" stroke="#666" stroke-width="1.100"/></g></svg>
<svg class="abs" style="left:628px;top:328px;will-change:transform" width="28" height="29"><g transform="translate(1,4)"><rect x="0" y="0" width="17.700" height="19.100" rx="1.300" fill="#eabd7c"/><rect x="2.700" y="-1" width="12.300" height="17.500" fill="#fff"/><path d="M3 2.700v-1.900a.6.6 0 0 1 .6-.6h2.300a3 2.800 0 0 1 6 0h2.300a.6.6 0 0 1 .6.6v1.900z" fill="#666"/><circle cx="8.900" cy="-.3" r="0.950" fill="#fff"/><path d="M8.400 12.300C8.400 9.600 9.800 7.900 12.300 7.700" fill="none" stroke="#3a72b3" stroke-width="1.400"/><path d="M11.800 5.300l3.300 2.400l-3.300 2.400z" fill="#3a72b3"/><path d="M6 11.700l2.400 3.200l2.400 -3.200z" fill="#3a72b3"/><rect x="15.3" y="6.2" width="6.3" height="9.8" fill="#fff"/><rect x="5.2" y="15.4" width="11" height="6" fill="#fff"/><rect x="16.400" y="7.300" width="4.200" height="7.800" fill="#fff" stroke="#666" stroke-width="1.100"/><rect x="16.950" y="7.850" width="3.100" height="3.300" fill="#9dc3e6"/><path d="M16.400 11.300h4.200" stroke="#666" stroke-width="1"/><rect x="6.300" y="16.400" width="8.400" height="4" fill="#fff" stroke="#666" stroke-width="1.100"/><rect x="6.850" y="16.950" width="3.500" height="2.900" fill="#9dc3e6"/><path d="M10.500 16.400v4" stroke="#666" stroke-width="1"/></g></svg>
<svg class="abs" style="left:658px;top:328px;will-change:transform" width="28" height="29"><g transform="translate(1,4)"><rect x="0" y="0" width="17.700" height="19.100" rx="1.300" fill="#eabd7c"/><rect x="2.700" y="-1" width="12.300" height="17.500" fill="#fff"/><path d="M3 2.700v-1.900a.6.6 0 0 1 .6-.6h2.300a3 2.800 0 0 1 6 0h2.300a.6.6 0 0 1 .6.6v1.900z" fill="#666"/><circle cx="8.900" cy="-.3" r="0.950" fill="#fff"/><rect x="5.300" y="3.800" width="9" height="10.800" fill="#fff" stroke="#666" stroke-width="1"/><rect x="6.800" y="5.600" width="5.600" height="1.600" fill="#3a9e7a"/><rect x="6.800" y="8.400" width="3" height="1.500" fill="#999"/><rect x="6.800" y="11.200" width="3" height="1.500" fill="#3a9e7a"/><rect x="11.200" y="9.500" width="9.800" height="11.500" fill="#fff" stroke="#666" stroke-width="1.100"/><rect x="13" y="11.600" width="5.600" height="1.700" fill="#3a72b3"/><rect x="13" y="14.500" width="4" height="1.700" fill="#e2574c"/><rect x="13" y="17.400" width="5.600" height="1.700" fill="#e2574c"/></g></svg>
<svg class="abs" style="left:568px;top:380px;will-change:transform" width="28" height="29"><g transform="translate(1,4)"><rect x="0" y="0" width="17.700" height="19.100" rx="1.300" fill="#eabd7c"/><rect x="2.700" y="-1" width="12.300" height="17.500" fill="#fff"/><path d="M3 2.700v-1.900a.6.6 0 0 1 .6-.6h2.300a3 2.800 0 0 1 6 0h2.300a.6.6 0 0 1 .6.6v1.900z" fill="#666"/><circle cx="8.900" cy="-.3" r="0.950" fill="#fff"/><rect x="5.2" y="13" width="17" height="9" fill="#fff"/><text x="5.100" y="20" font-family="Liberation Sans,sans-serif" font-size="9.700" fill="#2e2e2e" stroke="#2e2e2e" stroke-width=".3" textLength="15.600" lengthAdjust="spacingAndGlyphs">123</text></g></svg>
<svg class="abs" style="left:598px;top:380px;will-change:transform" width="28" height="29"><g transform="translate(1,4)"><rect x="0" y="0" width="17.700" height="19.100" rx="1.300" fill="#eabd7c"/><rect x="2.700" y="-1" width="12.300" height="17.500" fill="#fff"/><path d="M3 2.700v-1.900a.6.6 0 0 1 .6-.6h2.300a3 2.800 0 0 1 6 0h2.300a.6.6 0 0 1 .6.6v1.900z" fill="#666"/><circle cx="8.900" cy="-.3" r="0.950" fill="#fff"/><rect x="5.2" y="13" width="17" height="9" fill="#fff"/><text x="4.3" y="11.8" font-family="Liberation Sans,sans-serif" font-size="10.5" fill="#3a3a3a" stroke="#3a3a3a" stroke-width=".2">%</text><text x="5.100" y="20" font-family="Liberation Sans,sans-serif" font-size="9.700" fill="#2e2e2e" stroke="#2e2e2e" stroke-width=".3" textLength="15.600" lengthAdjust="spacingAndGlyphs">123</text></g></svg>
<svg class="abs" style="left:628px;top:380px;will-change:transform" width="28" height="29"><g transform="translate(1,4)"><rect x="0" y="0" width="17.700" height="19.100" rx="1.300" fill="#eabd7c"/><rect x="2.700" y="-1" width="12.300" height="17.500" fill="#fff"/><path d="M3 2.700v-1.900a.6.6 0 0 1 .6-.6h2.300a3 2.800 0 0 1 6 0h2.300a.6.6 0 0 1 .6.6v1.900z" fill="#666"/><circle cx="8.900" cy="-.3" r="0.950" fill="#fff"/><g transform="translate(-0.5,-6.2)"><path d="M20.200 4.600l.5 3.800l-4.600 5.500l-2.300-1.900l4-4.900z" fill="#fff" stroke="#fff" stroke-width="1.800" stroke-linejoin="round"/><path d="M13.200 12.500l2.500 2.100c.9 2.400-1.600 4.300-4.600 5c-2.500.5-5 .6-6.900.4c2.800-1 3.800-2.500 4.800-4.200c1-1.800 2.500-3.100 4.200-3.300z" fill="#fff" stroke="#fff" stroke-width="1.800" stroke-linejoin="round"/><path d="M20.200 4.600l.5 3.800l-4.600 5.500l-2.300-1.900l4-4.900z" fill="#757575"/><path d="M14.300 11.200l2.200 1.800" stroke="#fff" stroke-width=".6"/><path d="M13.200 12.500l2.500 2.100c.9 2.400-1.600 4.300-4.600 5c-2.500.5-5 .6-6.900.4c2.800-1 3.800-2.500 4.800-4.200c1-1.800 2.500-3.100 4.200-3.300z" fill="#3a72b3"/><path d="M9.700 17.400c1.300-1.700 3.200-2.100 4.200-.9" stroke="#fff" stroke-width="1.100" fill="none" stroke-linecap="round"/></g><rect x="5.2" y="13" width="17" height="9" fill="#fff"/><text x="5.100" y="20" font-family="Liberation Sans,sans-serif" font-size="9.700" fill="#2e2e2e" stroke="#2e2e2e" stroke-width=".3" textLength="15.600" lengthAdjust="spacingAndGlyphs">123</text></g></svg>
<svg class="abs" style="left:568px;top:433px;will-change:transform" width="28" height="29"><g transform="translate(1,4)"><rect x="0" y="0" width="17.700" height="19.100" rx="1.300" fill="#eabd7c"/><rect x="2.700" y="-1" width="12.300" height="17.500" fill="#fff"/><path d="M3 2.700v-1.900a.6.6 0 0 1 .6-.6h2.300a3 2.800 0 0 1 6 0h2.300a.6.6 0 0 1 .6.6v1.900z" fill="#666"/><circle cx="8.900" cy="-.3" r="0.950" fill="#fff"/><text x="3.5" y="13" font-family="Liberation Sans,sans-serif" font-size="11" fill="#3a3a3a" stroke="#3a3a3a" stroke-width=".2">%</text><g transform="translate(0,0)"><path d="M20.200 4.600l.5 3.800l-4.600 5.500l-2.300-1.900l4-4.900z" fill="#fff" stroke="#fff" stroke-width="1.800" stroke-linejoin="round"/><path d="M13.200 12.500l2.500 2.100c.9 2.400-1.600 4.300-4.600 5c-2.500.5-5 .6-6.900.4c2.800-1 3.800-2.500 4.800-4.200c1-1.800 2.500-3.100 4.200-3.300z" fill="#fff" stroke="#fff" stroke-width="1.800" stroke-linejoin="round"/><path d="M20.200 4.600l.5 3.800l-4.600 5.500l-2.300-1.900l4-4.900z" fill="#757575"/><path d="M14.300 11.200l2.200 1.800" stroke="#fff" stroke-width=".6"/><path d="M13.200 12.500l2.500 2.100c.9 2.400-1.600 4.300-4.600 5c-2.500.5-5 .6-6.900.4c2.800-1 3.800-2.500 4.800-4.200c1-1.800 2.500-3.100 4.200-3.300z" fill="#3a72b3"/><path d="M9.700 17.400c1.300-1.700 3.200-2.100 4.200-.9" stroke="#fff" stroke-width="1.100" fill="none" stroke-linecap="round"/></g></g></svg>
<svg class="abs" style="left:598px;top:433px;will-change:transform" width="28" height="29"><g transform="translate(1,4)"><rect x="0" y="0" width="17.700" height="19.100" rx="1.300" fill="#eabd7c"/><rect x="2.700" y="-1" width="12.300" height="17.500" fill="#fff"/><path d="M3 2.700v-1.900a.6.6 0 0 1 .6-.6h2.300a3 2.800 0 0 1 6 0h2.300a.6.6 0 0 1 .6.6v1.900z" fill="#666"/><circle cx="8.900" cy="-.3" r="0.950" fill="#fff"/><g transform="translate(0,0)"><rect x="5.5" y="13" width="16.5" height="8" fill="#fff"/><rect x="6.85" y="14.55" width="13.10" height="5.00" rx="2.50" fill="none" stroke="#3a72b3" stroke-width="1.9"/><path d="M11.45 14.93L15.35 19.17" stroke="#3a72b3" stroke-width="2.18" stroke-linecap="round"/><path d="M13.44 13.30l1.1 2.40M12.26 18.40l1.1 2.40" stroke="#fff" stroke-width=".8"/></g></g></svg>
<svg class="abs" style="left:628px;top:433px;will-change:transform" width="28" height="29"><g transform="translate(1,4)"><rect x="0" y="0" width="17.700" height="19.100" rx="1.300" fill="#eabd7c"/><rect x="2.700" y="-1" width="12.300" height="17.500" fill="#fff"/><path d="M3 2.700v-1.900a.6.6 0 0 1 .6-.6h2.300a3 2.800 0 0 1 6 0h2.300a.6.6 0 0 1 .6.6v1.900z" fill="#666"/><circle cx="8.900" cy="-.3" r="0.950" fill="#fff"/><g transform="translate(0,-1.5)"><rect x="7.5" y="8.5" width="14.5" height="14" fill="#fff"/><rect x="8.900" y="9.900" width="11.600" height="11" fill="#fff" stroke="#666" stroke-width="1.200"/><path d="M10.200 19.600l3.200-4.500l2.200 2.800l1.300-1.500l2.600 3.200z" fill="#3a72b3"/><circle cx="17" cy="13.200" r="1.100" fill="#eabd7c"/></g></g></svg>
<svg class="abs" style="left:658px;top:433px;will-change:transform" width="28" height="29"><g transform="translate(1,4)"><rect x="0" y="0" width="17.700" height="19.100" rx="1.300" fill="#eabd7c"/><rect x="2.700" y="-1" width="12.300" height="17.500" fill="#fff"/><path d="M3 2.700v-1.900a.6.6 0 0 1 .6-.6h2.300a3 2.800 0 0 1 6 0h2.300a.6.6 0 0 1 .6.6v1.900z" fill="#666"/><circle cx="8.900" cy="-.3" r="0.950" fill="#fff"/><g transform="translate(-.8,-2.300)"><rect x="9.800" y="5.800" width="11.600" height="11.800" fill="#fff" stroke="#666" stroke-width="1.100"/><path d="M11.500 15.500l3-4l2 2.300l1.200-1.300l2.300 3z" fill="#3a72b3"/><circle cx="17.800" cy="8.800" r="1" fill="#eabd7c"/></g><g transform="translate(-3.2,0.3)"><rect x="5.5" y="13" width="16.5" height="8" fill="#fff"/><rect x="6.85" y="14.55" width="13.10" height="5.00" rx="2.50" fill="none" stroke="#3a72b3" stroke-width="1.9"/><path d="M11.45 14.93L15.35 19.17" stroke="#3a72b3" stroke-width="2.18" stroke-linecap="round"/><path d="M13.44 13.30l1.1 2.40M12.26 18.40l1.1 2.40" stroke="#fff" stroke-width=".8"/></g></g></svg>
<svg class="abs" style="left:346px;top:176px" width="14" height="16"><path d="M2.500 1.200l7 8.800M11.300 1.200l-7 8.800" stroke="#666" stroke-width="1.500" fill="none"/><path d="M2 .8l1.600 0l3.800 5.700l-1 .8zM11.800 .8l-1.600 0l-3.800 5.700l1 .8z" fill="#666"/><circle cx="3.200" cy="12.200" r="2.200" fill="#fff" stroke="#3a72b3" stroke-width="1.200"/><circle cx="10.600" cy="12.200" r="2.200" fill="#fff" stroke="#3a72b3" stroke-width="1.200"/></svg>
<svg class="abs" style="left:344px;top:199px" width="18" height="18"><path d="M1.700 2.300h4.800l2.300 2.300v7.700h-7.100z" fill="#fff" stroke="#666" stroke-width="1.100"/><path d="M3.300 5.500h3M3.300 7.500h3M3.300 9.500h3" stroke="#3a72b3" stroke-width="1"/><path d="M7.900 5.500h5l2.700 2.700v7.400h-7.700z" fill="#fff" stroke="#666" stroke-width="1.100"/><path d="M9.700 9.500h4.300M9.700 11.500h4.300M9.700 13.500h4.300" stroke="#3a72b3" stroke-width="1"/></svg>
<svg class="abs" style="left:345px;top:222px" width="18" height="18"><rect x="1.200" y="3.100" width="12.800" height="12.600" rx="1" fill="#eabd7c"/><path d="M4.300 5v-1.900h1.600a1.900 1.900 0 0 1 3.600 0h1.600v1.900z" fill="#666"/><circle cx="7.700" cy="2.700" r=".7" fill="#fff"/><rect x="6.800" y="7.300" width="10" height="10" fill="#fff"/><path d="M8.300 8.800h4.500l2.500 2.500v5h-7z" fill="#fff" stroke="#666" stroke-width="1.100"/><path d="M12.800 8.800v2.500h2.500" fill="none" stroke="#666" stroke-width="1"/></svg>
<svg class="abs" style="left:344px;top:300px" width="18" height="20"><path d="M6.500 13.200l-4 3.600" stroke="#3a72b3" stroke-width="2.500"/><circle cx="10.400" cy="8.200" r="5.600" fill="#fff" stroke="#3a72b3" stroke-width="1.600"/><circle cx="10.400" cy="5.500" r="1" fill="#3a3a3a"/><rect x="9.500" y="7.700" width="1.800" height="4" fill="#3a3a3a"/></svg>
<svg class="abs" style="left:344px;top:400px" width="18" height="18"><path d="M7.500 4.100h8.400" stroke="#666" stroke-width="1.900"/><path d="M15.400 4v12.400h-12.900v-3" fill="none" stroke="#666" stroke-width="1.100"/><path d="M4 1.900h3.800l-2.200 4.700h1.400l-5.800 6.300l2.300-5.200h-2z" fill="#eabd7c"/><rect x="7" y="7" width="4.100" height="1.900" fill="#d6492a"/><rect x="5.800" y="9.900" width="8.200" height="1.900" fill="#3a72b3"/><rect x="5.800" y="13" width="6" height="1.800" fill="#4a9c80"/></svg>
<svg class="abs" style="left:344px;top:475px" width="18" height="18"><rect x="1.500" y="1.500" width="15" height="15" fill="#fff" stroke="#666" stroke-width="1.100"/><path d="M1.500 7.500h15M1.500 10.500h15M1.500 13.500h15M6.300 4v12.500M11.600 4v12.500" stroke="#9a9a9a" stroke-width="1" fill="none"/><rect x="1" y="1" width="16" height="3.900" fill="#3a72b3"/><path d="M2.900 2.700h2M7.900 2.700h2M12.900 2.700h2" stroke="#fff" stroke-width=".9"/></svg>
<svg class="abs" style="left:344px;top:500px" width="18" height="18"><path d="M8.200 3.400h6.300a1.200 1.200 0 0 1 1.200 1.200v6.500a1.200 1.200 0 0 1 -1.200 1.200h-6l-3.100 3.900v-3.900h-2a1.200 1.200 0 0 1 -1.200 -1.200v-2" fill="none" stroke="#666" stroke-width="1.100"/><path d="M3.900 2.100v5.800M1 5h5.800" stroke="#4a9c80" stroke-width="1.900"/></svg>
<svg class="abs" style="left:344px;top:527px" width="18" height="18"><rect x="2.500" y="1.500" width="13" height="14.800" fill="#fff" stroke="#666" stroke-width="1.100"/><rect x="2" y="1" width="14" height="3" fill="#3a72b3"/><circle cx="6.500" cy="7.500" r="1.300" fill="#666"/><circle cx="6.500" cy="12.400" r="1.100" fill="#fff" stroke="#666" stroke-width=".9"/><path d="M9.200 7.500h3.700M9.200 12.400h3.700" stroke="#666" stroke-width="1"/></svg>
<svg class="abs" style="left:344px;top:598px" width="19" height="19"><g fill="none" stroke="#666" stroke-width="1.100"><circle cx="7" cy="8.200" r="5.600"/><ellipse cx="7" cy="8.200" rx="2.400" ry="5.600"/><path d="M1.900 5.800h10.200M1.500 9.200h11"/></g><rect x="0" y="10.500" width="18" height="8.500" fill="#fff"/><rect x="11" y="9.800" width="4" height="2" fill="#fff"/><rect x="3.00" y="12.10" width="12.90" height="4.70" rx="2.35" fill="none" stroke="#3a72b3" stroke-width="2"/><path d="M7.51 12.50L11.39 16.40" stroke="#3a72b3" stroke-width="2.30" stroke-linecap="round"/><path d="M9.61 10.80l1.1 2.50M8.19 15.60l1.1 2.50" stroke="#fff" stroke-width=".8"/></svg></body></html>
